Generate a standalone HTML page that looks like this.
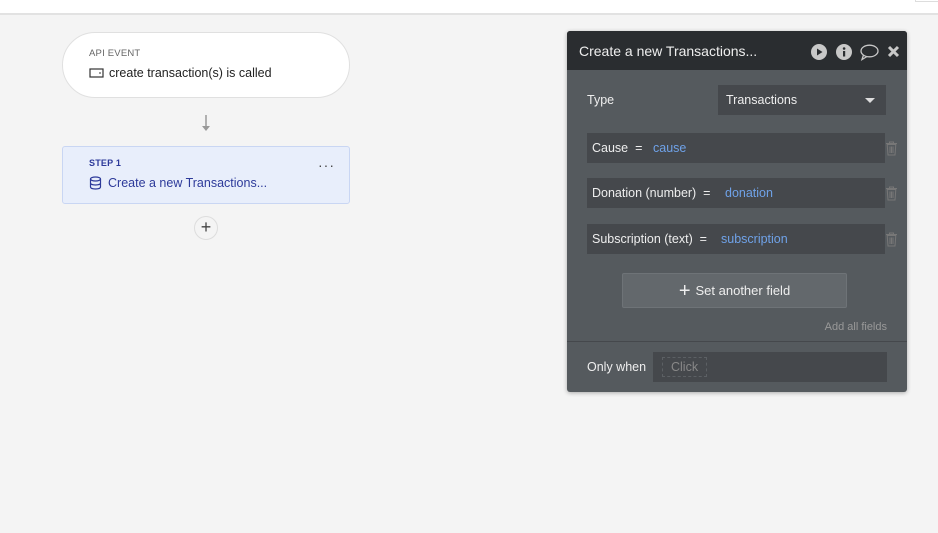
<!DOCTYPE html>
<html><head><meta charset="utf-8"><style>
*{box-sizing:border-box;margin:0;padding:0}
body{width:938px;height:533px;overflow:hidden;background:#f4f4f4;font-family:"Liberation Sans",sans-serif;position:relative}
.top{position:absolute;left:0;top:0;width:938px;height:15px;background:#fff;border-bottom:2px solid #e2e2e2}
.tr{position:absolute;left:915px;top:0;width:23px;height:2px;border-bottom:1px solid #ddd;border-left:1px solid #ddd;background:#fff}
.ev{position:absolute;left:62px;top:32px;width:288px;height:66px;background:#fff;border:1px solid #e0e0e0;border-radius:33px}
.lab{position:absolute;left:26px;font-size:9.5px;color:#666;letter-spacing:.2px}
.ev .lab{top:15px}
.ev .t{position:absolute;left:26px;top:33px;font-size:12.5px;color:#222;display:flex;align-items:center}
.step{position:absolute;left:62px;top:146px;width:288px;height:58px;background:#e8eefb;border:1px solid #c9d6f3;border-radius:3px}
.step .lab{top:11px;color:#2d3a9a;font-weight:bold;font-size:9px}
.step .t{position:absolute;left:26px;top:29px;font-size:12.5px;color:#2d3a9a;display:flex;align-items:center}
.dots{position:absolute;right:14px;top:10px;font-size:14px;color:#444;letter-spacing:1px}
.arrow{position:absolute;left:200px;top:113px}
.plus{position:absolute;left:194px;top:216px;width:24px;height:24px;border:1px solid #ddd;border-radius:50%;text-align:center;line-height:21px;font-size:18px;color:#444}
.pan{position:absolute;left:567px;top:31px;width:340px;height:361px;background:#555a5e;border-radius:3px;box-shadow:0 1px 4px rgba(0,0,0,.3);color:#eee;font-size:12.5px}
.hd{height:39px;background:#2a2d30;border-radius:3px 3px 0 0;position:relative}
.hd .tt{position:absolute;left:12px;top:12px;font-size:14px;color:#eee}
.ic{position:absolute;top:13px}
.row{position:absolute;left:20px;width:298px;height:30px;background:#45484c;font-size:12.5px}
.row span{position:absolute;top:8px}
.blue{color:#6fa2e8}
.trash{position:absolute;left:318px;top:9px}
.btn{position:absolute;left:55px;top:242px;width:225px;height:35px;background:#63686c;border:1px solid #6e7377;border-radius:2px;text-align:center;line-height:34px;font-size:13px}
.sep{position:absolute;left:0;top:310px;width:340px;border-top:1px solid #45484c}
</style></head><body>
<div class="top"></div><div class="tr"></div>
<div class="ev"><div class="lab">API EVENT</div><div class="t"><svg width="15" height="10" style="margin-right:5px"><rect x="1" y="1" width="13" height="8" fill="none" stroke="#333" stroke-width="1.2"/><line x1="10" y1="5" x2="12" y2="5" stroke="#333"/></svg>create transaction(s) is called</div></div>
<svg class="arrow" width="12" height="20"><line x1="6" y1="2" x2="6" y2="15" stroke="#999" stroke-width="1.5"/><path d="M2 13 L6 18 L10 13Z" fill="#999"/></svg>
<div class="step"><div class="lab">STEP 1</div><div class="dots">···</div><div class="t"><svg width="13" height="14" style="margin-right:6px"><ellipse cx="6.5" cy="3" rx="5" ry="2" fill="none" stroke="#2d3a9a" stroke-width="1.2"/><path d="M1.5 3v8c0 1.2 2.2 2 5 2s5-.8 5-2V3M1.5 7c0 1.2 2.2 2 5 2s5-.8 5-2" fill="none" stroke="#2d3a9a" stroke-width="1.2"/></svg>Create a new Transactions...</div></div>
<div class="plus">+</div>
<div class="pan">
<div class="hd"><div class="tt">Create a new Transactions...</div>
<svg class="ic" style="left:244px" width="16" height="16"><circle cx="8" cy="8" r="8" fill="#c8c8c8"/><path d="M6 4.5L11.5 8L6 11.5Z" fill="#2a2d30"/></svg>
<svg class="ic" style="left:269px" width="16" height="16"><circle cx="8" cy="8" r="8" fill="#c8c8c8"/><rect x="7" y="7" width="2.2" height="5.5" fill="#2a2d30"/><circle cx="8.1" cy="4.5" r="1.3" fill="#2a2d30"/></svg>
<svg class="ic" style="left:293px" width="19" height="17"><ellipse cx="9.5" cy="7" rx="8.5" ry="5.8" fill="none" stroke="#c8c8c8" stroke-width="1.3"/><path d="M3.5 11 L2 15.5 L7 12.5" fill="none" stroke="#c8c8c8" stroke-width="1.3"/></svg>
<svg class="ic" style="left:320px;top:14px" width="13" height="13"><path d="M2 2L11 11M11 2L2 11" stroke="#c8c8c8" stroke-width="3"/></svg>
</div>
<div style="position:absolute;left:20px;top:62px">Type</div>
<div style="position:absolute;left:151px;top:54px;width:168px;height:30px;background:#45484c"><span style="position:absolute;left:8px;top:8px">Transactions</span><svg style="position:absolute;left:147px;top:13px" width="10" height="6"><path d="M0 0H10L5 5Z" fill="#ddd"/></svg></div>
<div class="row" style="top:102px"><span style="left:5px">Cause&nbsp; =</span><span class="blue" style="left:66px">cause</span></div>
<div class="row" style="top:147px"><span style="left:5px">Donation (number)&nbsp; =</span><span class="blue" style="left:138px">donation</span></div>
<div class="row" style="top:193px"><span style="left:5px">Subscription (text)&nbsp; =</span><span class="blue" style="left:134px">subscription</span></div>
<svg class="trash" style="top:110px" width="13" height="15"><path d="M1 2.5H12M4.5 2.5V1H8.5V2.5M2.2 3.5L3 14H10L10.8 3.5Z M5 5.5V12 M6.5 5.5V12 M8 5.5V12" fill="none" stroke="#777" stroke-width="1"/></svg>
<svg class="trash" style="top:155px" width="13" height="15"><path d="M1 2.5H12M4.5 2.5V1H8.5V2.5M2.2 3.5L3 14H10L10.8 3.5Z M5 5.5V12 M6.5 5.5V12 M8 5.5V12" fill="none" stroke="#777" stroke-width="1"/></svg>
<svg class="trash" style="top:201px" width="13" height="15"><path d="M1 2.5H12M4.5 2.5V1H8.5V2.5M2.2 3.5L3 14H10L10.8 3.5Z M5 5.5V12 M6.5 5.5V12 M8 5.5V12" fill="none" stroke="#777" stroke-width="1"/></svg>
<div class="btn"><span style="font-size:20px;vertical-align:-2px;margin-right:5px">+</span>Set another field</div>
<div style="position:absolute;right:20px;top:290px;font-size:11px;color:#999">Add all fields</div>
<div class="sep"></div>
<div style="position:absolute;left:20px;top:329px">Only when</div>
<div style="position:absolute;left:86px;top:321px;width:234px;height:30px;background:#45484c"><span style="position:absolute;left:9px;top:5px;border:1px dashed #5c6064;padding:2px 8px;color:#888">Click</span></div>
</div>
</body></html>
